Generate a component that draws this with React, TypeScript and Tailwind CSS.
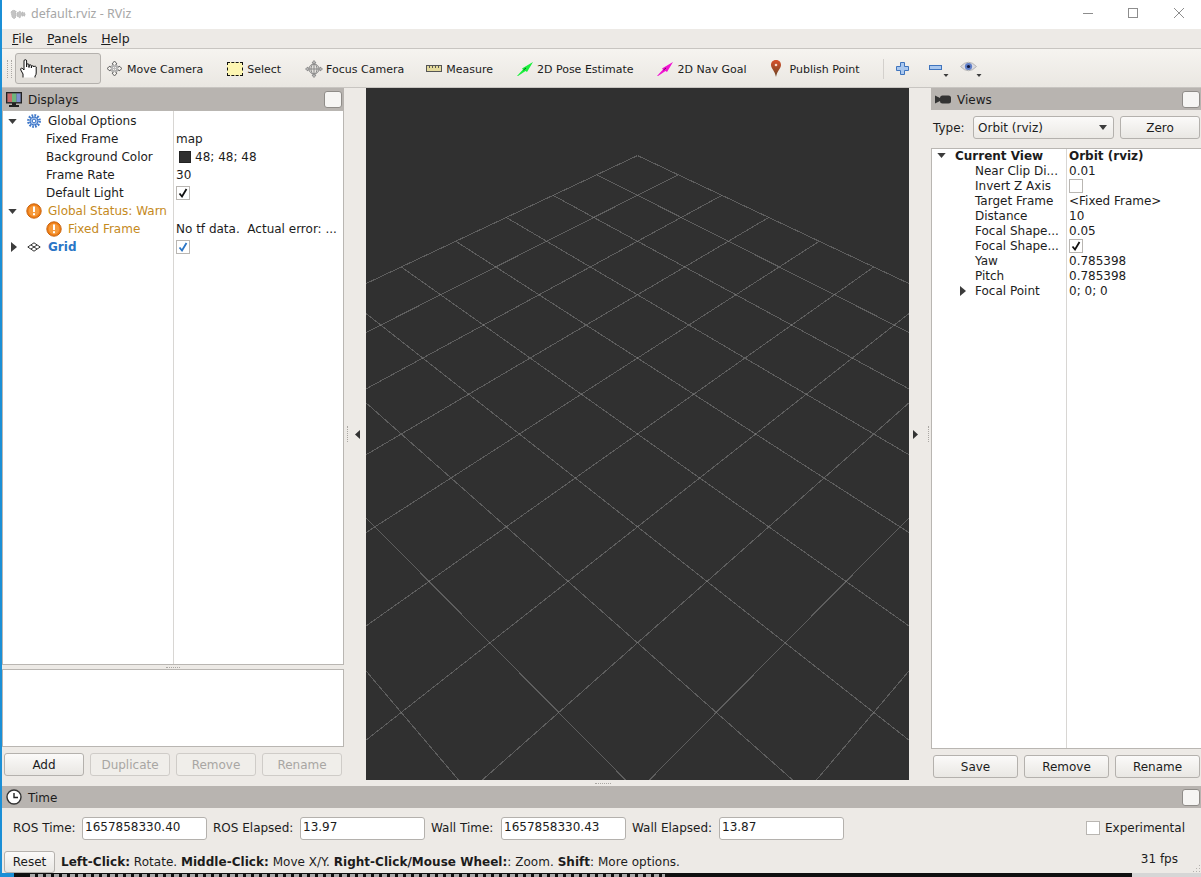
import React from "react";

const font = "font-['DejaVu_Sans',sans-serif]";

// grid projection, same camera as the rviz default orbit view
const F = 835.3;
function project(x: number, y: number): [number, number] {
  const u = (x - y) / Math.SQRT2;
  const v = (x + y) / 2;
  const z = 10 - v;
  return [271.5 + (F * u) / z, 346 + (F * v) / z];
}

function GridLines() {
  const lines = [];
  for (let i = -5; i <= 5; i++) {
    const a = project(-5, i);
    const b = project(5, i);
    const c = project(i, -5);
    const d = project(i, 5);
    lines.push(<line key={"a" + i} x1={a[0]} y1={a[1]} x2={b[0]} y2={b[1]} />);
    lines.push(<line key={"b" + i} x1={c[0]} y1={c[1]} x2={d[0]} y2={d[1]} />);
  }
  return (
    <svg width="543" height="692" viewBox="0 0 543 692" className="block" stroke="#8c8c8c" strokeOpacity="0.5" shapeRendering="crispEdges">
      {lines}
    </svg>
  );
}

function Check({ on = true, color = "#111" }: { on?: boolean; color?: string }) {
  return (
    <span className="flex h-[14px] w-[14px] items-center justify-center border border-[#b9b6b2] bg-white">
      {on && (
        <svg width="10" height="10" viewBox="0 0 10 10">
          <path d="M1.5 5.5 L4 8.5 L8.5 1" fill="none" stroke={color} strokeWidth="1.8" />
        </svg>
      )}
    </span>
  );
}

function Down({ className = "" }: { className?: string }) {
  return (
    <svg width="10" height="6" viewBox="0 0 10 6" className={className}>
      <path d="M0 0 H10 L5 6 Z" fill="#3c3c3c" />
    </svg>
  );
}

function Right({ className = "" }: { className?: string }) {
  return (
    <svg width="6" height="10" viewBox="0 0 6 10" className={className}>
      <path d="M0 0 V10 L6 5 Z" fill="#3c3c3c" />
    </svg>
  );
}

function Warn() {
  return (
    <svg width="16" height="16" viewBox="0 0 16 16">
      <circle cx="8" cy="8" r="7.2" fill="#f07d14" stroke="#c8650f" />
      <circle cx="8" cy="8" r="5.4" fill="#f59a3c" />
      <rect x="7" y="3.5" width="2" height="5.5" fill="#fff" />
      <rect x="7" y="10.2" width="2" height="2" fill="#fff" />
    </svg>
  );
}

function Gear() {
  return (
    <svg width="14" height="14" viewBox="0 0 14 14">
      <circle cx="7" cy="7" r="5.6" fill="none" stroke="#3f78c9" strokeWidth="2.6" strokeDasharray="1.7 1.2" />
      <circle cx="7" cy="7" r="4" fill="#a9c4ec" stroke="#3f78c9" />
      <circle cx="7" cy="7" r="1.8" fill="#fff" stroke="#3f78c9" />
    </svg>
  );
}

function HeaderBox() {
  return <span className="h-[17px] w-[18px] rounded-[3px] border border-[#8f8c88] bg-[#f6f5f3]" />;
}

function PanelHeader({ icon, title, pr = "pr-[1px]" }: { icon: React.ReactNode; title: string; pr?: string }) {
  return (
    <div className={`flex h-[22px] items-center bg-[#b8b4b0] pl-[3px] text-[12px] text-[#1c1c1c] ${pr}`}>
      <span className="flex w-[18px] justify-center">{icon}</span>
      <span className="ml-[5px] flex-1 pt-[2px]">{title}</span>
      <HeaderBox />
    </div>
  );
}

function Btn({
  children,
  disabled,
  className = "",
  h = "h-[23px]",
}: {
  children: React.ReactNode;
  disabled?: boolean;
  className?: string;
  h?: string;
}) {
  return (
    <div
      className={`flex items-center justify-center rounded-[3px] border text-[12px] ${h} ${
        disabled
          ? "border-[#cfccc8] bg-[#f0eeea] text-[#a8a6a3]"
          : "border-[#b4b1ad] bg-gradient-to-b from-[#fbfaf9] to-[#e9e7e3] text-[#1c1c1c]"
      } ${className}`}
    >
      {children}
    </div>
  );
}

function ToolItem({ icon, label, className = "" }: { icon: React.ReactNode; label: string; className?: string }) {
  return (
    <div className={`flex items-center whitespace-nowrap ${className}`}>
      {icon}
      <span className="pt-[4px]">{label}</span>
    </div>
  );
}

function DisplayRow({ left, value }: { left: React.ReactNode; value?: React.ReactNode }) {
  return (
    <div className="flex h-[18px] items-center">
      <div className="flex h-full w-[171px] items-center whitespace-nowrap pl-[43px]">{left}</div>
      <div className="flex h-full flex-1 items-center whitespace-pre pl-[2px]">{value}</div>
    </div>
  );
}

function ViewRow({ name, value, arrow }: { name: string; value: React.ReactNode; arrow?: boolean }) {
  return (
    <div className="flex h-[15px] items-center">
      <div className="relative flex h-full w-[134px] items-center whitespace-nowrap pl-[43px]">
        {arrow && <Right className="absolute left-[28px] top-[3px]" />}
        <span>{name}</span>
      </div>
      <div className="flex h-full flex-1 items-center whitespace-nowrap pl-[3px]">{value}</div>
    </div>
  );
}

function TimeField({ label, value, labelW }: { label: string; value: string; labelW: string }) {
  return (
    <>
      <span className={`whitespace-nowrap ${labelW}`}>{label}</span>
      <span className="ml-[6px] flex h-[23px] w-[125px] items-center rounded-[3px] border border-[#b4b1ad] bg-white pb-[3px] pl-[2px]">
        {value}
      </span>
    </>
  );
}

const Dots = ({ className = "" }: { className?: string }) => (
  <div className={`border-t border-dotted border-[#aaa7a3] ${className}`} />
);

export default function App() {
  return (
    <div className={`flex h-[877px] w-[1201px] overflow-hidden bg-[#101010] ${font}`}>
      <div className="w-[2px] bg-[#1b8fd6]" />
      <div className="flex h-full flex-1 flex-col bg-[#edeae6] text-[12px] text-[#1c1c1c]">
        {/* title bar */}
        <div className="flex h-[29px] items-center bg-white pl-[8px] font-['Noto_Sans',sans-serif] text-[#a7a7a7]">
          <svg width="16" height="12" viewBox="0 0 16 12" fill="#c4c4c4" stroke="#b4b4b4" strokeWidth="0.8" strokeDasharray="1.2 0.8">
            <path d="M1 3 L3 1 L6 2 L6 8 L4 10 L2 8 Z" />
            <path d="M7 4 L10 2 L12 5 L10 9 L7 7 Z" />
            <path d="M12 3 L15 4 L15 7 L12 7 Z" />
          </svg>
          <span className="ml-[5px] text-[12.5px]">default.rviz - RViz</span>
          <div className="ml-auto flex items-center">
            <svg width="140" height="29" viewBox="0 0 140 29" fill="none" stroke="#8d8d8d" shapeRendering="crispEdges">
              <path d="M22 13.5 H32" />
              <rect x="67.5" y="8.5" width="9" height="9" />
              <path d="M113 8 L123 18 M123 8 L113 18" shapeRendering="auto" />
            </svg>
          </div>
        </div>
        {/* menu */}
        <div className="flex h-[19px] items-center gap-[14px] pl-[10px] pt-[2px] text-[12.5px]">
          <span><u>F</u>ile</span>
          <span><u>P</u>anels</span>
          <span><u>H</u>elp</span>
        </div>
        {/* toolbar */}
        <div className="flex h-[40px] items-center border-y border-[#c8c5c1] bg-gradient-to-b from-[#f6f4f0] to-[#eae7e2] pt-[1px] text-[11px]">
          <div className="ml-[5px] h-[18px] w-[5px] border-x border-dotted border-[#aaa7a3]" />
          <div className="ml-[3px] flex h-[31px] w-[86px] items-center rounded-[3px] border border-[#b4b1ad] bg-[#e2dfda] pl-[4px]">
            <svg width="17" height="19" viewBox="0 0 17 19" fill="#fff" stroke="#111" strokeWidth="1">
              <path d="M3 18.5 V15 L0.8 11 Q0.2 9.2 1.6 9.2 Q2.8 9.2 4 11 V2 A1.3 1.3 0 0 1 6.6 2 V8 V6 A1.2 1.2 0 0 1 9 6 V8.5 V7 A1.2 1.2 0 0 1 11.4 7 V9 V8 A1.2 1.2 0 0 1 13.8 8 A1.2 1.2 0 0 1 16.2 9 V14 Q16.2 16 15 17 V18.5" />
            </svg>
            <span className="ml-[3px] pt-[4px]">Interact</span>
          </div>
          <ToolItem
            className="ml-[5px]"
            label="Move Camera"
            icon={
              <svg width="17" height="17" viewBox="0 0 17 17" fill="#f4f2ee" stroke="#666" className="mr-[4px]">
                <path d="M8.5 1 L11 4 H10 V7 H13 V6 L16 8.5 L13 11 V10 H10 V13 H11 L8.5 16 L6 13 H7 V10 H4 V11 L1 8.5 L4 6 V7 H7 V4 H6 Z" />
                <path d="M5 6 H12 M5 8.5 H12 M5 11 H12 M6 5 V12 M8.5 5 V12 M11 5 V12" stroke="#bbb" />
              </svg>
            }
          />
          <ToolItem
            className="ml-[24px]"
            label="Select"
            icon={<span className="mr-[4px] h-[14px] w-[16px] border border-dashed border-[#111] bg-[#fdf6b2]" />}
          />
          <ToolItem
            className="ml-[24px]"
            label="Focus Camera"
            icon={
              <svg width="18" height="18" viewBox="0 0 18 18" fill="none" stroke="#8a8a8a" className="mr-[3px]">
                <circle cx="9" cy="9" r="5" fill="#e4e2de" />
                <path d="M9 1 V17 M1 9 H17 M6 9 a3 5 0 0 1 6 0 M6 9 a3 5 0 0 0 6 0" />
                <path d="M9 0.5 L7 3 H11 Z M9 17.5 L7 15 H11 Z M0.5 9 L3 7 V11 Z M17.5 9 L15 7 V11 Z" fill="#ddd" />
              </svg>
            }
          />
          <ToolItem
            className="ml-[22px]"
            label="Measure"
            icon={
              <svg width="16" height="7" viewBox="0 0 16 7" className="mr-[4px]">
                <rect x="0.5" y="0.5" width="15" height="6" fill="#e4da9c" stroke="#555" />
                <path d="M3.5 1 V3 M6.5 1 V3 M9.5 1 V3 M12.5 1 V3" stroke="#555" />
              </svg>
            }
          />
          <ToolItem
            className="ml-[24px]"
            label="2D Pose Estimate"
            icon={
              <svg width="16" height="14" viewBox="0 0 16 14" className="mr-[4px]">
                <path d="M0 14 L6 7.5 L5 6.5 L16 0 L10 10 L8.5 9 L1 14 Z" fill="#19ef3c" />
                <path d="M6.5 8 L9 6" stroke="#0a5a18" />
              </svg>
            }
          />
          <ToolItem
            className="ml-[24px]"
            label="2D Nav Goal"
            icon={
              <svg width="16" height="14" viewBox="0 0 16 14" className="mr-[4px]">
                <path d="M0 14 L6 7.5 L5 6.5 L16 0 L10 10 L8.5 9 L1 14 Z" fill="#f012d0" />
                <path d="M6.5 8 L9 6" stroke="#6a0a60" />
              </svg>
            }
          />
          <ToolItem
            className="ml-[24px]"
            label="Publish Point"
            icon={
              <svg width="12" height="17" viewBox="0 0 12 17" className="mr-[7px]">
                <defs>
                  <linearGradient id="pin" x1="0" y1="0" x2="0" y2="1">
                    <stop offset="0" stopColor="#d9512c" />
                    <stop offset="1" stopColor="#6a4424" />
                  </linearGradient>
                </defs>
                <path d="M6 0 C2.5 0 1 2.5 1 5 C1 8.5 5 11 6 17 C7 11 11 8.5 11 5 C11 2.5 9.5 0 6 0 Z" fill="url(#pin)" />
                <circle cx="6" cy="5" r="1.3" fill="#f4d8c8" />
              </svg>
            }
          />
          <div className="ml-[23px] h-[20px] w-px bg-[#d3d0cc]" />
          <svg width="13" height="13" viewBox="0 0 13 13" className="ml-[12px]">
            <path d="M4.5 0.5 H8.5 V4.5 H12.5 V8.5 H8.5 V12.5 H4.5 V8.5 H0.5 V4.5 H4.5 Z" fill="#a9c7ee" stroke="#3f74bd" />
          </svg>
          <div className="relative ml-[20px] h-[20px] w-[20px]">
            <svg width="13" height="5" viewBox="0 0 13 5" className="absolute left-0 top-[6px]">
              <rect x="0.5" y="0.5" width="12" height="4" fill="#a9c7ee" stroke="#3f74bd" />
            </svg>
            <Down className="absolute left-[14px] top-[15px] h-[3px] w-[6px]" />
          </div>
          <div className="relative ml-[11px] h-[20px] w-[24px]">
            <svg width="17" height="11" viewBox="0 0 17 11" className="absolute left-0 top-[2px]">
              <path d="M0.5 5.5 Q8.5 -3 16.5 5.5 Q8.5 14 0.5 5.5 Z" fill="#dcdbe0" stroke="#b5b5b5" />
              <circle cx="8.5" cy="5.5" r="3.6" fill="#5f7fc8" />
              <circle cx="8.5" cy="5.5" r="1.6" fill="#10163a" />
            </svg>
            <Down className="absolute left-[16px] top-[15px] h-[3px] w-[6px]" />
          </div>
        </div>
        {/* main area */}
        <div className="flex h-[692px]">
          <div className="flex w-[342px] flex-col">
            <PanelHeader
              title="Displays"
              pr="pr-[2px]"
              icon={
                <svg width="16" height="15" viewBox="0 0 16 15">
                  <rect x="0.5" y="0.5" width="15" height="10.5" fill="#444" stroke="#222" />
                  <rect x="1.5" y="1.5" width="4.5" height="8.5" fill="#c96a6a" />
                  <rect x="6" y="1.5" width="4.5" height="8.5" fill="#6fb57c" />
                  <rect x="10.5" y="1.5" width="4" height="8.5" fill="#7d8fd0" />
                  <path d="M6 11 H10 V13 H13 V15 H3 V13 H6 Z" fill="#222" />
                </svg>
              }
            />
            <div className="relative h-[555px] border border-[#b9b6b2] bg-white pt-[1px]">
              <div className="absolute bottom-0 left-[170px] top-0 w-px bg-[#d8d6d3]" />
              <DisplayRow
                left={
                  <span className="-ml-[38px] flex items-center">
                    <Down className="h-[5px] w-[9px]" />
                    <span className="ml-[10px] flex"><Gear /></span>
                    <span className="ml-[7px]">Global Options</span>
                  </span>
                }
              />
              <DisplayRow left="Fixed Frame" value="map" />
              <DisplayRow
                left="Background Color"
                value={
                  <span className="flex items-center">
                    <span className="ml-[3px] mr-[4px] h-[12px] w-[12px] border border-[#222] bg-[#303030]" />
                    48; 48; 48
                  </span>
                }
              />
              <DisplayRow left="Frame Rate" value="30" />
              <DisplayRow left="Default Light" value={<Check />} />
              <DisplayRow
                left={
                  <span className="-ml-[38px] flex items-center text-[#c58a1d]">
                    <Down className="h-[5px] w-[9px]" />
                    <span className="ml-[9px] flex"><Warn /></span>
                    <span className="ml-[6px]">Global Status: Warn</span>
                  </span>
                }
              />
              <DisplayRow
                left={
                  <span className="flex items-center text-[#c58a1d]">
                    <Warn />
                    <span className="ml-[6px]">Fixed Frame</span>
                  </span>
                }
                value="No tf data.  Actual error: ..."
              />
              <DisplayRow
                left={
                  <span className="-ml-[38px] flex items-center font-bold text-[#2a75c6]">
                    <Right className="ml-[3px]" />
                    <span className="ml-[10px] flex">
                      <svg width="14" height="10" viewBox="0 0 14 10" fill="none" stroke="#333">
                        <path d="M7 0.8 L13.2 5 L7 9.2 L0.8 5 Z M4 3 L10 7 M10 3 L4 7" />
                      </svg>
                    </span>
                    <span className="ml-[7px]">Grid</span>
                  </span>
                }
                value={<Check color="#2a75c6" />}
              />
            </div>
            <div className="flex h-[4px] items-center justify-center">
              <Dots className="w-[14px]" />
            </div>
            <div className="h-[78px] border border-[#b9b6b2] bg-white" />
            <div className="mt-[6px] flex gap-[6px] px-[2px]">
              <Btn className="w-[80px]">Add</Btn>
              <Btn disabled className="w-[80px]">Duplicate</Btn>
              <Btn disabled className="w-[80px]">Remove</Btn>
              <Btn disabled className="w-[80px]">Rename</Btn>
            </div>
          </div>
          <div className="flex w-[22px] items-center pl-[3px]">
            <div className="h-[16px] border-l border-dotted border-[#aaa7a3]" />
            <svg width="5" height="9" viewBox="0 0 5 9" className="ml-[7px]"><path d="M5 0 V9 L0 4.5 Z" fill="#333" /></svg>
          </div>
          <div className="w-[543px] bg-[#303030]">
            <GridLines />
          </div>
          <div className="flex w-[22px] items-center pl-[4px]">
            <svg width="5" height="9" viewBox="0 0 5 9"><path d="M0 0 V9 L5 4.5 Z" fill="#333" /></svg>
            <div className="ml-[10px] h-[16px] border-l border-dotted border-[#aaa7a3]" />
          </div>
          <div className="flex flex-1 flex-col">
            <PanelHeader
              title="Views"
              icon={
                <svg width="16" height="9" viewBox="0 0 16 9">
                  <path d="M0 0.5 L5 3 V6 L0 8.5 Z" fill="#333" />
                  <rect x="5" y="0.5" width="11" height="8" rx="2.5" fill="#333" />
                </svg>
              }
            />
            <div className="flex h-[38px] items-start pl-[2px] pr-[1px] pt-[6px]">
              <span className="flex h-[23px] w-[40px] items-center">Type:</span>
              <div className="flex h-[23px] w-[141px] items-center justify-between rounded-[3px] border border-[#b4b1ad] bg-gradient-to-b from-[#fbfaf9] to-[#ebe9e5] pl-[4px] pr-[6px]">
                Orbit (rviz)
                <Down className="h-[5px] w-[8px]" />
              </div>
              <Btn className="ml-[6px] flex-1">Zero</Btn>
            </div>
            <div className="relative h-[601px] border-y border-l border-[#b9b6b2] bg-white">
              <div className="absolute bottom-0 left-[134px] top-0 w-px bg-[#d8d6d3]" />
              <div className="-mt-[1px]">
                <div className="flex h-[15px] items-center font-bold">
                  <div className="relative flex h-full w-[134px] items-center pl-[23px]">
                    <Down className="absolute left-[5px] top-[5px] h-[5px] w-[9px]" />
                    Current View
                  </div>
                  <div className="pl-[3px]">Orbit (rviz)</div>
                </div>
                <ViewRow name="Near Clip Di..." value="0.01" />
                <ViewRow name="Invert Z Axis" value={<Check on={false} />} />
                <ViewRow name="Target Frame" value="<Fixed Frame>" />
                <ViewRow name="Distance" value="10" />
                <ViewRow name="Focal Shape..." value="0.05" />
                <ViewRow name="Focal Shape..." value={<Check />} />
                <ViewRow name="Yaw" value="0.785398" />
                <ViewRow name="Pitch" value="0.785398" />
                <ViewRow name="Focal Point" value="0; 0; 0" arrow />
              </div>
            </div>
            <div className="mt-[6px] flex gap-[6px] pl-[2px] pr-[1px]">
              <Btn className="flex-1">Save</Btn>
              <Btn className="flex-1">Remove</Btn>
              <Btn className="flex-1">Rename</Btn>
            </div>
          </div>
        </div>
        {/* splitter */}
        <div className="flex h-[6px] items-center justify-center">
          <Dots className="ml-[2px] w-[16px]" />
        </div>
        {/* time panel */}
        <PanelHeader
          title="Time"
          icon={
            <svg width="16" height="16" viewBox="0 0 16 16">
              <circle cx="8" cy="8" r="7" fill="#fff" stroke="#333" strokeWidth="1.4" />
              <path d="M8 4 V8.5 H12" fill="none" stroke="#222" strokeWidth="1.4" />
            </svg>
          }
        />
        <div className="flex h-[42px] items-center pb-[2px] pl-[11px]">
          <TimeField label="ROS Time:" value="1657858330.40" labelW="w-[63px]" />
          <span className="ml-[6px]" />
          <TimeField label="ROS Elapsed:" value="13.97" labelW="w-[81px]" />
          <span className="ml-[6px]" />
          <TimeField label="Wall Time:" value="1657858330.43" labelW="w-[64px]" />
          <span className="ml-[6px]" />
          <TimeField label="Wall Elapsed:" value="13.87" labelW="w-[81px]" />
          <div className="ml-auto mr-[16px] flex items-center">
            <Check on={false} />
            <span className="ml-[5px]">Experimental</span>
          </div>
        </div>
        <div className="relative flex flex-1 items-start pl-[2px] pt-[1px]">
          <Btn className="w-[51px]" h="h-[22px]">Reset</Btn>
          <span className="ml-[6px] mt-[2px] whitespace-nowrap tracking-[0.03px]">
            <b>Left-Click:</b> Rotate. <b>Middle-Click:</b> Move X/Y. <b>Right-Click/Mouse Wheel:</b>: Zoom. <b>Shift</b>: More options.
          </span>
          <span className="ml-auto mr-[23px] -mt-[1px]">31 fps</span>
          <svg width="10" height="10" viewBox="0 0 10 10" fill="#b5b2ae" className="absolute bottom-0 right-0">
            <rect x="8" y="8" width="1" height="1" />
            <rect x="5" y="8" width="1" height="1" />
            <rect x="2" y="8" width="1" height="1" />
            <rect x="8" y="5" width="1" height="1" />
            <rect x="5" y="5" width="1" height="1" />
            <rect x="8" y="2" width="1" height="1" />
          </svg>
        </div>
        {/* desktop behind the window: only the tops of a terminal line show */}
        <div className="flex h-[4px] overflow-hidden bg-[#101010]">
          <div className="w-[12px] bg-[#1b8fd6]" />
          <div className="flex-1 pl-[16px] pt-[1px]">
            <div className="h-[3px] w-[635px] bg-[repeating-linear-gradient(90deg,#a8a8a8_0,#a8a8a8_5px,transparent_5px,transparent_8px)]" />
          </div>
          <div className="w-[69px] bg-[#d6d6d6]" />
        </div>
      </div>
    </div>
  );
}
